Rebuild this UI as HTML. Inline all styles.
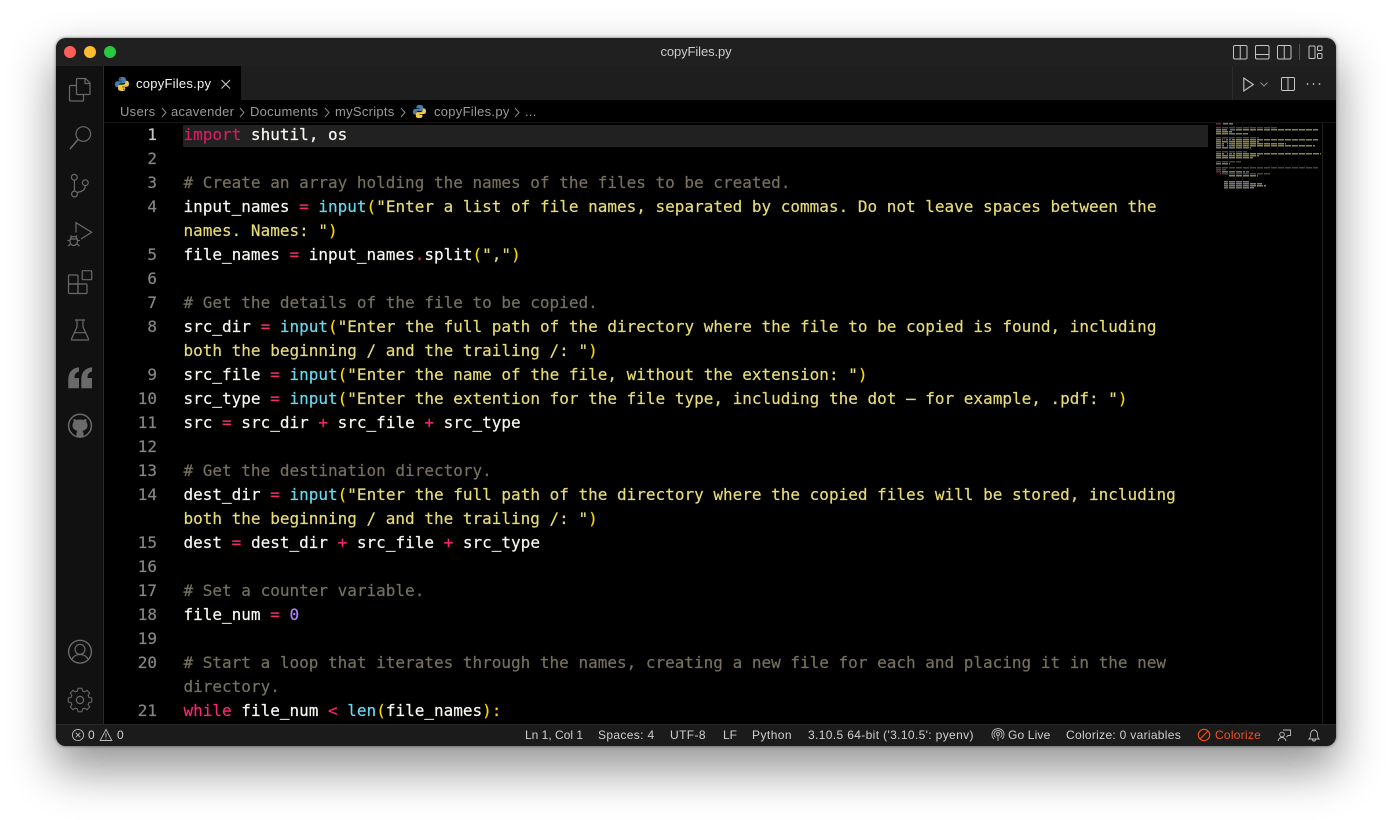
<!DOCTYPE html>
<html>
<head>
<meta charset="utf-8">
<style>
html,body{margin:0;padding:0;width:1392px;height:820px;background:#fff;overflow:hidden}
*{box-sizing:border-box}
body{font-family:"Liberation Sans",sans-serif;position:relative}
.abs{position:absolute}
#win{position:absolute;left:56px;top:38px;width:1280px;height:708px;border-radius:10px;background:#000;overflow:hidden}
#shadow{position:absolute;left:56px;top:38px;width:1280px;height:708px;border-radius:10px;box-shadow:0 22px 46px 2px rgba(0,0,0,.42),0 0 3px rgba(0,0,0,.55)}
#title{position:absolute;left:0;top:0;width:1280px;height:28px;background:#202020;color:#ccc;font-size:13px;line-height:28px;text-align:center;letter-spacing:-.1px}
.light{position:absolute;top:8px;width:12px;height:12px;border-radius:50%}
#tabs{position:absolute;left:48px;top:28px;width:1232px;height:34px;background:#1e1e1e}
#tab{position:absolute;left:0;top:0;width:137px;height:34px;background:#000;color:#f4f4f4;font-size:13px;line-height:36px;letter-spacing:.25px}
#crumb{position:absolute;left:48px;top:62px;width:1232px;height:23px;background:#000;border-bottom:1px solid #141414;color:#9a9a9a;font-size:13px;line-height:24px;letter-spacing:.28px}
#crumb span{position:absolute;top:0}
#act{position:absolute;left:0;top:28px;width:48px;height:658px;background:#111;border-right:1px solid #2a2a2a}
#act svg{position:absolute;left:0;width:48px;height:48px;fill:none;stroke:#6a6a6a;stroke-width:1.2}
#status{position:absolute;left:0;top:686px;width:1280px;height:22px;background:#1b1b1b;border-top:1px solid #2b2b2b;color:#cfcfcf;font-size:12px;line-height:21px}
#status span{position:absolute;top:0;white-space:nowrap}
#hl{position:absolute;left:127px;top:87px;width:1025px;height:22px;background:#212121}
#nums,#code{position:absolute;top:85px;margin:0;font-family:"DejaVu Sans Mono","Liberation Mono",monospace;font-size:16px;line-height:24px;white-space:pre;-webkit-text-stroke:.2px}
#nums{left:48px;width:53px;text-align:right;color:#858585}
#nums b{font-weight:normal;color:#c6c6c6}
#code{left:127.5px;color:#f8f8f2}
.k{color:#f92672}.i{color:#d81b60}.c{color:#75715e}.s{color:#e6db74}.f{color:#66d9ef}.n{color:#ae81ff}.p{color:#ffd700}
#mini{position:absolute;left:1160px;top:85px}
#sb{position:absolute;left:1266px;top:85px;width:1px;height:601px;background:#1d1d1d}
</style>
</head>
<body>
<div id="shadow"></div>
<div id="win">
  <div id="title">copyFiles.py
    <div class="light" style="left:8px;background:#ff5f57"></div>
    <div class="light" style="left:28px;background:#febc2e"></div>
    <div class="light" style="left:48px;background:#28c840"></div>
    <svg class="abs" style="left:1170px;top:0" width="110" height="28" fill="none" stroke="#c5c5c5" stroke-width="1">
      <rect x="7.500" y="7.500" width="13.500" height="13.500" rx="1.500"/><path d="M14.250 7.500v13.500"/>
      <rect x="29.500" y="7.500" width="13.500" height="13.500" rx="1.500"/><path d="M29.500 16.500h13.500"/>
      <rect x="51.500" y="7.500" width="13.500" height="13.500" rx="1.500"/><path d="M58.250 7.500v13.500"/>
      <path d="M73.500 6v16" stroke="#555"/>
      <rect x="83" y="8" width="6" height="12.500" rx="1"/><rect x="91.500" y="8" width="4.500" height="4.500" rx="1"/><rect x="91.500" y="15.500" width="4.500" height="5" rx="1"/>
    </svg>
  </div>

  <div id="act">
    <svg style="top:0" viewBox="0 0 48 48"><path d="M20.500 12.500h9l4.500 4.500v10.500a1 1 0 0 1-1 1H21.500a1 1 0 0 1-1-1v-14.500a.9.9 0 0 1 .5-.5zM29 12.500v5h5"/><path d="M20.500 19.500h-6a1 1 0 0 0-1 1v13.500a1 1 0 0 0 1 1h12a1 1 0 0 0 1-1v-5.500"/></svg>
    <svg style="top:48px" viewBox="0 0 48 48"><circle cx="27.300" cy="20" r="7.300"/><path d="M22 25.500L14 35" stroke-width="1.500"/></svg>
    <svg style="top:96px" viewBox="0 0 48 48"><circle cx="18.300" cy="15.300" r="2.900"/><circle cx="18.500" cy="32" r="2.900"/><circle cx="29.300" cy="20.700" r="2.900"/><path d="M18.400 18.200v10.900M21 30.500c5.500-1 8.300-2.600 8.300-6.900"/></svg>
    <svg style="top:144px" viewBox="0 0 48 48"><path d="M20 22.500v-9.800l15.700 9.600-10.700 6.700"/><ellipse cx="17.700" cy="31" rx="3.800" ry="4.500"/><path d="M14.500 25.500l1.500 2M21 25.500l-1.500 2M11.500 30.500h2.500M21.500 30.500h2.500M12 36l2.500-2M23.500 36l-2.500-2M14 29h7.500" stroke-width="1.300"/></svg>
    <svg style="top:192px" viewBox="0 0 48 48"><rect x="12.500" y="17" width="9.500" height="9" rx="1"/><rect x="12.500" y="26" width="9.500" height="9.500" rx="1"/><rect x="22" y="26" width="9" height="9.500" rx="1"/><rect x="26.300" y="12.700" width="9.400" height="9" rx="1"/></svg>
    <svg style="top:240px" viewBox="0 0 48 48"><path d="M19 14h10M21 14v7l-5.500 12c-.2.500 0 1 .5 1h16c.5 0 .7-.5.5-1L27 21v-7M18.500 26.700h11"/></svg>
    <svg style="top:288px" viewBox="0 0 48 48"><path d="M12.300 34.300V25.500C12.300 18.500 16 14 23 13.300V17.500C19.500 18.500 18.500 20.500 18.500 24H23V34.300zM25.300 34.300V25.500C25.300 18.500 29 14 36 13.300V17.500C32.500 18.500 31.500 20.500 31.500 24H36V34.300z" fill="#6a6a6a" stroke="none"/></svg>
    <svg style="top:336px" viewBox="0 0 48 48"><circle cx="24" cy="23.700" r="11.400" stroke-width="1.500"/><path d="M24 17.500c-1.200 0-2.300.2-3.200.5-1-.7-2.200-1.200-3-1-.4 1-.4 2.200-.1 3-.8.900-1.200 2-1.200 3.300 0 3.200 1.800 5 5 5.500-.6.500-1 1.300-1 2.300v3.900h7v-3.900c0-1-.4-1.800-1-2.300 3.200-.5 5-2.300 5-5.500 0-1.300-.4-2.400-1.200-3.300.3-.8.3-2-.1-3-.8-.2-2 .3-3 1-.9-.3-2-.5-3.200-.5z" fill="#6a6a6a" stroke="none"/></svg>
    <svg style="top:562px" viewBox="0 0 48 48"><circle cx="24" cy="23.700" r="11.400" stroke-width="1.400"/><circle cx="24" cy="21.300" r="5"/><path d="M15.800 31.500c1.500-3.500 4.500-5 8.200-5s6.700 1.500 8.200 5"/></svg>
    <svg style="top:610px" viewBox="0 0 48 48"><path d="M21.800 12.500h4.400l.7 3.200 2.300 1 2.800-1.800 3.100 3.100-1.800 2.800 1 2.300 3.200.7v4.400l-3.200.7-1 2.300 1.800 2.800-3.100 3.100-2.800-1.800-2.300 1-.7 3.200h-4.400l-.7-3.200-2.300-1-2.800 1.800-3.100-3.100 1.800-2.800-1-2.300-3.200-.7v-4.400l3.200-.7 1-2.300-1.800-2.800 3.100-3.100 2.800 1.800 2.300-1z" transform="translate(24 24) scale(.87) translate(-24 -26)"/><circle cx="24" cy="24" r="3.600"/></svg>
  </div>

  <div id="tabs">
    <div id="tab">
      <svg class="abs" style="left:10px;top:10px" width="16" height="16" viewBox="0 0 16 16">
        <path d="M7.900 1C5 1 4.800 2.200 4.800 3.300v1.400H8v.6H3.300C2 5.300 1 6.300 1 8.300s1 3 2.300 3h1.300V9.600c0-1.300 1.100-2.200 2.300-2.200h3.200c1 0 1.800-.8 1.800-1.800V3c0-1.100-1-2-4-2zM6.200 2.100a.6.6 0 1 1 0 1.200.6.6 0 0 1 0-1.200z" fill="#3e7fb4"/>
        <path d="M8.100 15c2.900 0 3.100-1.200 3.100-2.300v-1.400H8v-.6h4.700c1.300 0 2.300-1 2.300-3s-1-3-2.300-3h-1.300v1.700c0 1.300-1.100 2.200-2.300 2.200H5.900c-1 0-1.800.8-1.800 1.800V13c0 1.100 1 2 4 2zm1.700-1.100a.6.6 0 1 1 0-1.200.6.6 0 0 1 0 1.200z" fill="#f3c93f"/>
      </svg>
      <span class="abs" style="left:32px;top:0">copyFiles.py</span>
      <svg class="abs" style="left:116px;top:12px" width="12" height="12" fill="none" stroke="#c8c8c8" stroke-width="1.100"><path d="M1.500 2l8.500 8.500M10 2l-8.500 8.500"/></svg>
    </div>
    <svg class="abs" style="left:1120px;top:0" width="112" height="34" fill="none" stroke="#c5c5c5" stroke-width="1">
      <path d="M8.500 0v34" stroke="#2c2c2c"/>
      <path d="M19.800 12v13l9.500-6.500z" stroke-width="1.100"/>
      <path d="M36.500 16.500l3.500 3.500 3.500-3.500" stroke="#8a8a8a"/>
      <rect x="57.500" y="11.500" width="13" height="13" rx="1.200"/><path d="M64 11.500v13"/>
      <g fill="#c5c5c5" stroke="none"><circle cx="83.500" cy="18" r=".9"/><circle cx="89.500" cy="18" r=".9"/><circle cx="95.500" cy="18" r=".9"/></g>
    </svg>
  </div>

  <div id="crumb">
    <span style="left:16px">Users</span>
    <svg class="abs" style="left:0;top:0" width="420" height="23" fill="none" stroke="#8a8a8a" stroke-width="1"><path d="M58 8l4 4.500-4 4.500M136 8l4 4.500-4 4.500M221 8l4 4.500-4 4.500M297 8l4 4.500-4 4.500M411 8l4 4.500-4 4.500"/></svg>
    <span style="left:67px">acavender</span>
    <span style="left:146px">Documents</span>
    <span style="left:231px">myScripts</span>
    <svg class="abs" style="left:308px;top:4px" width="15" height="15" viewBox="0 0 16 16">
      <path d="M7.900 1C5 1 4.800 2.200 4.800 3.300v1.400H8v.6H3.300C2 5.300 1 6.300 1 8.300s1 3 2.300 3h1.300V9.600c0-1.300 1.100-2.200 2.300-2.200h3.200c1 0 1.800-.8 1.800-1.800V3c0-1.100-1-2-4-2z" fill="#3e7fb4"/>
      <path d="M8.100 15c2.900 0 3.100-1.200 3.100-2.300v-1.400H8v-.6h4.700c1.300 0 2.300-1 2.300-3s-1-3-2.300-3h-1.300v1.700c0 1.300-1.100 2.200-2.300 2.200H5.900c-1 0-1.800.8-1.800 1.800V13c0 1.100 1 2 4 2z" fill="#f3c93f"/>
    </svg>
    <span style="left:330px">copyFiles.py</span>
    <span style="left:421px">...</span>
  </div>

  <div id="hl"></div>
  <pre id="nums"><b>1</b>
2
3
4

5
6
7
8

9
10
11
12
13
14

15
16
17
18
19
20

21</pre>
<pre id="code"><span class="i">import</span> shutil, os

<span class="c"># Create an array holding the names of the files to be created.</span>
input_names <span class="k">=</span> <span class="f">input</span><span class="p">(</span><span class="s">"Enter a list of file names, separated by commas. Do not leave spaces between the</span>
<span class="s">names. Names: "</span><span class="p">)</span>
file_names <span class="k">=</span> input_names<span class="k">.</span>split<span class="p">(</span><span class="s">","</span><span class="p">)</span>

<span class="c"># Get the details of the file to be copied.</span>
src_dir <span class="k">=</span> <span class="f">input</span><span class="p">(</span><span class="s">"Enter the full path of the directory where the file to be copied is found, including</span>
<span class="s">both the beginning / and the trailing /: "</span><span class="p">)</span>
src_file <span class="k">=</span> <span class="f">input</span><span class="p">(</span><span class="s">"Enter the name of the file, without the extension: "</span><span class="p">)</span>
src_type <span class="k">=</span> <span class="f">input</span><span class="p">(</span><span class="s">"Enter the extention for the file type, including the dot — for example, .pdf: "</span><span class="p">)</span>
src <span class="k">=</span> src_dir <span class="k">+</span> src_file <span class="k">+</span> src_type

<span class="c"># Get the destination directory.</span>
dest_dir <span class="k">=</span> <span class="f">input</span><span class="p">(</span><span class="s">"Enter the full path of the directory where the copied files will be stored, including</span>
<span class="s">both the beginning / and the trailing /: "</span><span class="p">)</span>
dest <span class="k">=</span> dest_dir <span class="k">+</span> src_file <span class="k">+</span> src_type

<span class="c"># Set a counter variable.</span>
file_num <span class="k">=</span> <span class="n">0</span>

<span class="c"># Start a loop that iterates through the names, creating a new file for each and placing it in the new</span>
<span class="c">directory.</span>
<span class="k">while</span> file_num <span class="k">&lt;</span> <span class="f">len</span><span class="p">(</span>file_names<span class="p">):</span></pre>

  <svg id="mini" width="106" height="72" opacity=".6" shape-rendering="crispEdges">
    <defs><pattern id="gap" width="7" height="72" patternUnits="userSpaceOnUse"><rect x="5" y="0" width="1" height="72" fill="#000"/></pattern></defs>
    <g fill="#f92672"><rect x="0" y="0" width="6" height="1.500"/><rect x="0" y="48" width="5" height="1.500"/><rect x="12" y="6" width="1" height="1.500"/><rect x="8" y="16" width="1" height="1.500"/></g>
    <g fill="#c8c8c0"><rect x="7" y="0" width="10" height="1.500"/><rect x="0" y="6" width="11" height="1.500"/><rect x="0" y="10" width="32" height="1.500"/><rect x="0" y="16" width="7" height="1.500"/><rect x="0" y="20" width="8" height="1.500"/><rect x="0" y="22" width="8" height="1.500"/><rect x="0" y="24" width="35" height="1.500"/><rect x="0" y="30" width="8" height="1.500"/><rect x="0" y="34" width="37" height="1.500"/><rect x="0" y="40" width="14" height="1.500"/><rect x="6" y="48" width="23" height="1.500"/><rect x="8" y="58" width="26" height="1.500"/><rect x="8" y="60" width="38" height="1.500"/><rect x="8" y="62" width="32" height="1.500"/><rect x="8" y="64" width="30" height="1.500"/></g>
    <g fill="#75715e"><rect x="0" y="4" width="62" height="1.500"/><rect x="0" y="14" width="43" height="1.500"/><rect x="0" y="28" width="31" height="1.500"/><rect x="0" y="38" width="25" height="1.500"/><rect x="0" y="44" width="102" height="1.500"/><rect x="0" y="46" width="10" height="1.500"/><rect x="4" y="50" width="50" height="1.500"/></g>
    <g fill="#e6db74"><rect x="20" y="6" width="82" height="1.500"/><rect x="0" y="8" width="16" height="1.500"/><rect x="16" y="16" width="86" height="1.500"/><rect x="0" y="18" width="43" height="1.500"/><rect x="15" y="20" width="55" height="1.500"/><rect x="15" y="22" width="84" height="1.500"/><rect x="17" y="30" width="88" height="1.500"/><rect x="0" y="32" width="43" height="1.500"/><rect x="12" y="52" width="30" height="1.500"/><rect x="38" y="62" width="12" height="1.500"/></g>
    <g fill="#66d9ef"><rect x="14" y="6" width="5" height="1.500"/><rect x="10" y="16" width="5" height="1.500"/><rect x="11" y="20" width="5" height="1.500"/><rect x="11" y="22" width="5" height="1.500"/><rect x="11" y="30" width="5" height="1.500"/><rect x="30" y="48" width="3" height="1.500"/></g>
    <rect x="0" y="0" width="106" height="72" fill="url(#gap)"/>
  </svg>
  <div id="sb"></div>

  <div id="status">
    <svg class="abs" style="left:15px;top:3px" width="14" height="14" fill="none" stroke="#bdbdbd" stroke-width=".9"><circle cx="7" cy="7" r="5.600"/><path d="M4.800 4.800l4.400 4.400M9.200 4.800l-4.400 4.400"/></svg>
    <span style="left:32px">0</span>
    <svg class="abs" style="left:43px;top:3px" width="14" height="14" fill="none" stroke="#bdbdbd" stroke-width=".9"><path d="M7 1.500l5.800 11H1.200zM7 5.500v4M7 10.500v1"/></svg>
    <span style="left:61px">0</span>
    <span style="left:469px">Ln 1, Col 1</span>
    <span style="left:542px;letter-spacing:.35px">Spaces: 4</span>
    <span style="left:614px;letter-spacing:.4px">UTF-8</span>
    <span style="left:667px">LF</span>
    <span style="left:696px;letter-spacing:.45px">Python</span>
    <span style="left:752px;letter-spacing:.36px">3.10.5 64-bit ('3.10.5': pyenv)</span>
    <svg class="abs" style="left:935px;top:3px" width="14" height="14" fill="none" stroke="#bdbdbd" stroke-width=".9"><circle cx="7" cy="6" r="1.500"/><path d="M4.500 9.500a4 4 0 1 1 5 0M3 11a6 6 0 1 1 8 0M7 8v5"/></svg>
    <span style="left:952px;letter-spacing:.15px">Go Live</span>
    <span style="left:1010px;letter-spacing:.3px">Colorize: 0 variables</span>
    <svg class="abs" style="left:1141px;top:3px" width="14" height="14" fill="none" stroke="#f4511e" stroke-width="1.100"><circle cx="7" cy="7" r="5.700"/><path d="M3 11L11 3"/></svg>
    <span style="left:1159px;color:#f4511e;letter-spacing:.25px">Colorize</span>
    <svg class="abs" style="left:1221px;top:3px" width="15" height="14" fill="none" stroke="#bdbdbd" stroke-width=".9"><circle cx="5" cy="6.500" r="2.300"/><path d="M1 13c.5-2.500 2-3.500 4-3.500s3.500 1 4 3.500M6 2h7.500v5.500H11l-1.500 1.500"/></svg>
    <svg class="abs" style="left:1251px;top:3px" width="14" height="14" fill="none" stroke="#bdbdbd" stroke-width=".9"><path d="M2 11c1.200-1 1.500-2 1.500-4.500C3.500 4 5 2 7 2s3.500 2 3.500 4.500c0 2.500.3 3.500 1.500 4.500zM5.500 11.500a1.500 1.500 0 0 0 3 0"/></svg>
  </div>
</div>
</body>
</html>
